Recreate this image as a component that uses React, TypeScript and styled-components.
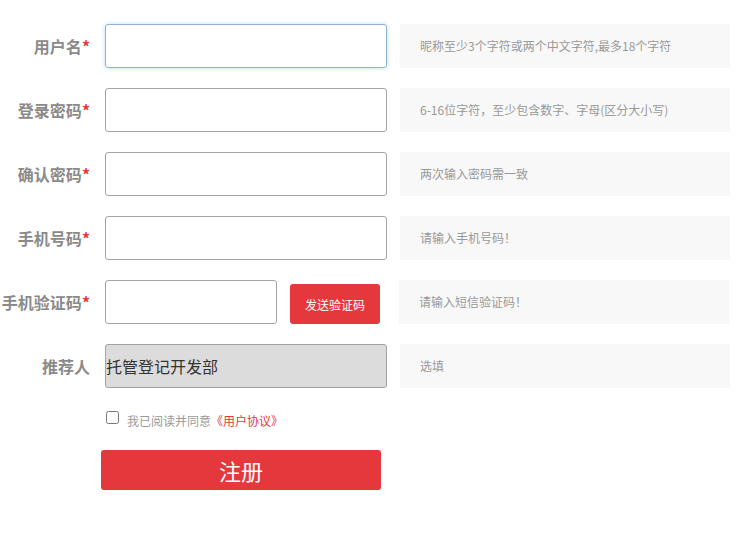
import React from 'react';
import styled, { createGlobalStyle } from 'styled-components';

const GlobalStyle = createGlobalStyle`
  body {
    margin: 0;
    background: #fff;
    font-family: "Noto Sans CJK SC", "Noto Sans", sans-serif;
  }
`;

const Form = styled.div`
  padding-top: 24px;
  width: 738px;
`;

const Row = styled.div`
  display: flex;
  align-items: center;
  height: 44px;
  margin-bottom: 20px;
`;

const Label = styled.label`
  width: 90px;
  flex-shrink: 0;
  text-align: right;
  font-size: 16px;
  font-weight: bold;
  color: #8a8a8a;
  line-height: 44px;
`;

const Star = styled.span`
  color: #e4393c;
`;

const Input = styled.input<{ $width?: number; $focus?: boolean; $readonly?: boolean }>`
  box-sizing: border-box;
  width: ${(p) => p.$width ?? 282}px;
  height: 44px;
  margin-left: 15px;
  padding: 0;
  border: 1px solid ${(p) => (p.$focus ? '#8fb4d6' : '#a3a3a3')};
  border-radius: 3px;
  background: ${(p) => (p.$readonly ? '#dcdcdc' : '#fff')};
  box-shadow: ${(p) => (p.$focus ? '0 0 4px rgba(102, 175, 233, 0.45)' : 'none')};
  font-family: "Noto Sans CJK SC", sans-serif;
  font-size: 16px;
  color: #333;
  outline: none;
`;

const Hint = styled.div<{ $gap?: number }>`
  box-sizing: border-box;
  width: 330px;
  height: 44px;
  margin-left: ${(p) => p.$gap ?? 13}px;
  padding-left: 20px;
  background: #f8f8f8;
  font-size: 12px;
  color: #999;
  line-height: 44px;
`;

const SendButton = styled.button`
  align-self: flex-end;
  width: 90px;
  height: 40px;
  margin-left: 13px;
  border: none;
  border-radius: 3px;
  background: #e5383d;
  color: #fff;
  font-family: "Noto Sans CJK SC", sans-serif;
  font-size: 12px;
  padding: 0;
`;

const AgreeRow = styled.div`
  display: flex;
  align-items: center;
  margin-left: 106px;
  margin-top: 23px;
  height: 18px;
  font-size: 12px;
  color: #999;
`;

const Check = styled.input`
  width: 13px;
  height: 13px;
  margin: -5px 8px 0 0;
  accent-color: #888;
`;

const Link = styled.a`
  color: #e4393c;
  text-decoration: none;
`;

const Submit = styled.button`
  display: block;
  width: 280px;
  height: 40px;
  margin: 21px 0 0 101px;
  border: none;
  border-radius: 3px;
  background: #e5383d;
  color: #fff;
  font-family: "Noto Sans CJK SC", sans-serif;
  font-size: 22px;
  padding: 0;
`;

const fields = [
  { label: '用户名', required: true, hint: '昵称至少3个字符或两个中文字符,最多18个字符', focus: true },
  { label: '登录密码', required: true, hint: '6-16位字符，至少包含数字、字母(区分大小写)' },
  { label: '确认密码', required: true, hint: '两次输入密码需一致' },
  { label: '手机号码', required: true, hint: '请输入手机号码！' },
];

export default function App() {
  return (
    <>
      <GlobalStyle />
      <Form>
        {fields.map((f) => (
          <Row key={f.label}>
            <Label>
              {f.label}
              {f.required && <Star>*</Star>}
            </Label>
            <Input $focus={f.focus} />
            <Hint>{f.hint}</Hint>
          </Row>
        ))}
        <Row>
          <Label>
            手机验证码<Star>*</Star>
          </Label>
          <Input $width={172} />
          <SendButton>发送验证码</SendButton>
          <Hint $gap={19}>请输入短信验证码！</Hint>
        </Row>
        <Row>
          <Label>推荐人</Label>
          <Input $readonly readOnly defaultValue="托管登记开发部" />
          <Hint>选填</Hint>
        </Row>
        <AgreeRow>
          <Check type="checkbox" />
          我已阅读并同意<Link href="#">《用户协议》</Link>
        </AgreeRow>
        <Submit>注册</Submit>
      </Form>
    </>
  );
}
